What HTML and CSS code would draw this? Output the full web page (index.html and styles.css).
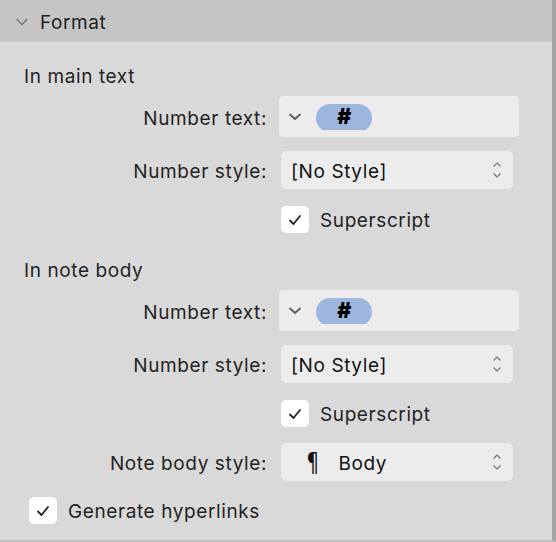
FILE: index.html
```html
<!DOCTYPE html>
<html>
<head>
<meta charset="utf-8">
<link rel="stylesheet" href="styles.css">
</head>
<body>
<div class="panel">
  <div class="header">
    <svg class="disclosure" width="12" height="8" viewBox="0 0 12 8"><polyline points="0.8,1 6,6.6 11.2,1" fill="none" stroke="#6b6b6b" stroke-width="1.2"/></svg>
    <span class="header-title">Format</span>
  </div>
  <div class="content">
    <div class="section-title">In main text</div>
    <div class="row row-field">
      <div class="label">Number text:</div>
      <div class="token-field">
        <svg class="caret" width="12" height="8" viewBox="0 0 12 8"><polyline points="1,1.5 6,6 11,1.5" fill="none" stroke="#5c5c5c" stroke-width="1.8" stroke-linecap="round" stroke-linejoin="round"/></svg>
        <span class="pill-clip"><span class="pill">#</span></span>
      </div>
    </div>
    <div class="row row-select">
      <div class="label">Number style:</div>
      <div class="select">
        <span class="select-text">[No Style]</span>
        <svg class="updown" width="10" height="18" viewBox="0 0 10 18"><polyline points="1.5,5.5 5,2 8.5,5.5" fill="none" stroke="#777" stroke-width="1.2"/><polyline points="1.5,12.5 5,16 8.5,12.5" fill="none" stroke="#777" stroke-width="1.2"/></svg>
      </div>
    </div>
    <div class="row row-check">
      <div class="label"></div>
      <label class="check"><span class="box"><svg width="14" height="12" viewBox="0 0 14 12"><polyline points="2,6.5 5.5,10 12,2" fill="none" stroke="#222" stroke-width="1.8" stroke-linecap="round" stroke-linejoin="round"/></svg></span><span class="check-text">Superscript</span></label>
    </div>

    <div class="section-title second">In note body</div>
    <div class="row row-field">
      <div class="label">Number text:</div>
      <div class="token-field">
        <svg class="caret" width="12" height="8" viewBox="0 0 12 8"><polyline points="1,1.5 6,6 11,1.5" fill="none" stroke="#5c5c5c" stroke-width="1.8" stroke-linecap="round" stroke-linejoin="round"/></svg>
        <span class="pill-clip"><span class="pill">#</span></span>
      </div>
    </div>
    <div class="row row-select">
      <div class="label">Number style:</div>
      <div class="select">
        <span class="select-text">[No Style]</span>
        <svg class="updown" width="10" height="18" viewBox="0 0 10 18"><polyline points="1.5,5.5 5,2 8.5,5.5" fill="none" stroke="#777" stroke-width="1.2"/><polyline points="1.5,12.5 5,16 8.5,12.5" fill="none" stroke="#777" stroke-width="1.2"/></svg>
      </div>
    </div>
    <div class="row row-check">
      <div class="label"></div>
      <label class="check"><span class="box"><svg width="14" height="12" viewBox="0 0 14 12"><polyline points="2,6.5 5.5,10 12,2" fill="none" stroke="#222" stroke-width="1.8" stroke-linecap="round" stroke-linejoin="round"/></svg></span><span class="check-text">Superscript</span></label>
    </div>
    <div class="row row-body">
      <div class="label">Note body style:</div>
      <div class="select">
        <span class="pilcrow">¶</span>
        <span class="select-text body-text">Body</span>
        <svg class="updown" width="10" height="18" viewBox="0 0 10 18"><polyline points="1.5,5.5 5,2 8.5,5.5" fill="none" stroke="#777" stroke-width="1.2"/><polyline points="1.5,12.5 5,16 8.5,12.5" fill="none" stroke="#777" stroke-width="1.2"/></svg>
      </div>
    </div>
    <label class="check gen"><span class="box"><svg width="14" height="12" viewBox="0 0 14 12"><polyline points="2,6.5 5.5,10 12,2" fill="none" stroke="#222" stroke-width="1.8" stroke-linecap="round" stroke-linejoin="round"/></svg></span><span class="check-text">Generate hyperlinks</span></label>
  </div>
</div>
</body>
</html>
```
FILE: styles.css
```css
html, body {
  margin: 0;
  padding: 0;
}
body {
  width: 556px;
  height: 542px;
  overflow: hidden;
  font-family: Inter, "Liberation Sans", sans-serif;
  font-size: 19px;
  letter-spacing: 0.6px;
  color: #242424;
  background: #d9d9d9;
}
.panel {
  box-sizing: border-box;
  width: 556px;
  height: 542px;
  border-right: 4px solid #a4a4a4;
  border-bottom: 2px solid #c2c2c2;
  background: #d9d9d9;
}
.header {
  height: 42px;
  background: #c5c5c5;
  display: flex;
  align-items: center;
  padding-left: 16px;
}
.disclosure {
  margin-right: 12px;
  margin-top: 1px;
}
.header-title {
  font-size: 19px;
  color: #1e1e1e;
  padding-top: 2px;
}
.content {
  padding-top: 23px;
}
.section-title {
  height: 22px;
  line-height: 24px;
  padding-left: 24px;
}
.section-title.second {
  margin-top: 26px;
}
.row {
  display: flex;
  align-items: center;
}
.label {
  width: 267px;
  text-align: right;
  flex: none;
  padding-top: 3px;
}
.row-field {
  margin-top: 9px;
}
.row-select {
  margin-top: 14px;
}
.row-check {
  margin-top: 17px;
}
.row-body {
  margin-top: 16px;
}
.token-field {
  margin-left: 12px;
  width: 240px;
  height: 41px;
  background: #ececec;
  border-radius: 4px;
  display: flex;
  align-items: flex-start;
}
.caret {
  margin: 17px 0 0 10px;
}
.pill-clip {
  margin: 8px 0 0 15px;
  height: 26px;
  overflow: hidden;
  display: block;
}
.pill {
  display: flex;
  align-items: center;
  justify-content: center;
  width: 56px;
  height: 28px;
  border-radius: 14px;
  background: #9db6dd;
  color: #000;
  font-weight: 900;
  font-style: italic;
  font-size: 21px;
  line-height: 28px;
  letter-spacing: 0;
  box-sizing: border-box;
  padding-bottom: 3px;
}
.select {
  margin-left: 14px;
  width: 232px;
  height: 38px;
  background: #ececec;
  border-radius: 5px;
  display: flex;
  align-items: center;
  box-sizing: border-box;
  padding-left: 10px;
  padding-right: 11px;
}
.select-text {
  flex: 1;
  color: #111;
  padding-top: 2px;
}
.updown {
  flex: none;
}
.pilcrow {
  font-family: "DejaVu Sans Condensed", "DejaVu Sans", sans-serif;
  font-size: 27px;
  line-height: 27px;
  margin-left: 14px;
  margin-right: 18px;
  color: #111;
  letter-spacing: 0;
  transform: scaleX(0.8);
}
.check {
  display: flex;
  align-items: center;
  margin-left: 14px;
}
.check-text {
  padding-top: 2px;
}
.box {
  width: 28px;
  height: 27px;
  background: #fff;
  border-radius: 5px;
  display: flex;
  align-items: center;
  justify-content: center;
  margin-right: 11px;
}
.gen {
  margin-top: 16px;
  margin-left: 29px;
}
```
